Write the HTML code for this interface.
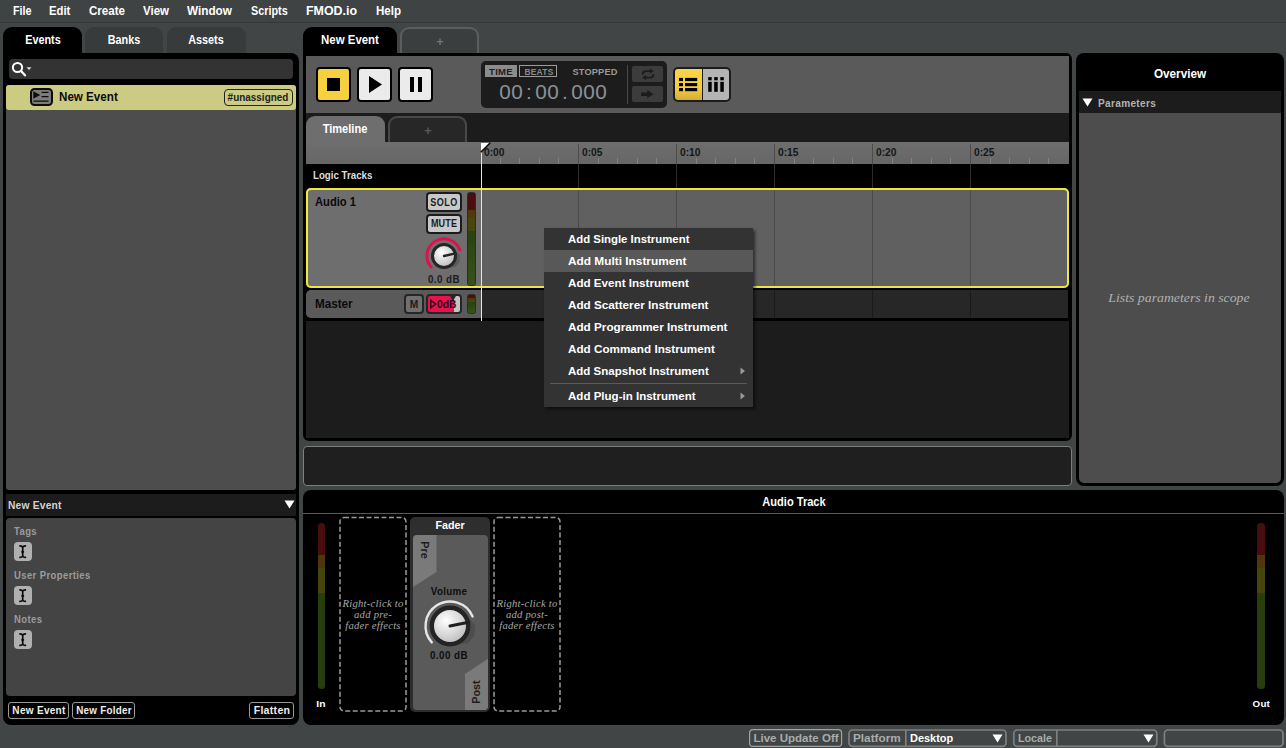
<!DOCTYPE html>
<html lang="en">
<head>
<meta charset="utf-8">
<title>FMOD Studio - New Event</title>
<style>
*{box-sizing:border-box;margin:0;padding:0}
html,body{width:1286px;height:748px;overflow:hidden}
body{background:#414545;font-family:"Liberation Sans",sans-serif;font-weight:bold;font-size:11.5px;color:#fff;position:relative}
.a{position:absolute}
.t{position:absolute;white-space:nowrap;line-height:14px;font-size:12.3px;transform-origin:0 50%;transform:scaleX(var(--s,.88))}
.tc{position:absolute;white-space:nowrap;line-height:14px;font-size:12.3px;transform:translateX(-50%) scaleX(var(--s,.88))}
/* menu bar */
#menubar{left:0;top:0;width:1286px;height:23px;background:#3f4343;border-bottom:1px solid #343838}
#menubar span{position:absolute;top:4px;font-size:12.300px;line-height:14px;color:#fff;transform-origin:0 50%;transform:scaleX(var(--s,.88))}
/* tabs */
.tab{border-radius:9px 9px 0 0;height:26px}
.tab.on{background:#000}
.tab.off{background:#373b3b}
.tab.plus{background:#3a3e3e;border:2px solid #5a5e5e;border-bottom:none;color:#6a6e6e}
.btn{border:1px solid #9a9a9a;border-radius:3px}
.lab{color:#9b9b9b;font-size:10.800px}
.ibtn{width:18px;height:18.700px;border-radius:4px;background:#b0b0b0}
.mi{left:24px;font-size:11.800px;color:#fff;--s:.93}
.clock{white-space:nowrap;font-weight:normal;font-size:19.600px;line-height:24px;color:#8a9299}
.clock i{display:inline-block;width:12px;text-align:center;font-style:normal;transform:scaleX(1.06)}
.sbox{top:730px;height:17px;border:1px solid #7d8181;border-radius:3px}
.meter2{border-radius:3.500px;background:linear-gradient(#480d0d 0,#480d0d 19%,#50360e 19%,#50360e 27%,#46440f 27%,#46440f 42.300%,#283e0e 42.300%)}
.trk{border:2px solid #1c1c1c;border-radius:4px;background:#c8c8c8}
.tbtn{top:67px;width:35px;height:35px;border:2px solid #000;border-radius:4px;background:#ebebeb}
.meter{border-radius:2.500px;border:1px solid #2c2c2c;background:linear-gradient(#4a0e0e 0,#4a0e0e 19%,#50380f 19%,#50380f 26.500%,#47460f 26.500%,#47460f 41%,#2a4110 41%,#36531a 100%)}
.hint{font-family:"Liberation Serif",serif;font-style:italic;font-weight:normal;color:#a8a8a8}
</style>
</head>
<body>

<!-- ===== MENU BAR ===== -->
<div id="menubar" class="a">
<span style="left:12.500px">File</span>
<span style="left:49px;--s:.92">Edit</span>
<span style="left:89px;--s:.94">Create</span>
<span style="left:143px;--s:.935">View</span>
<span style="left:186.500px;--s:.955">Window</span>
<span style="left:250.500px">Scripts</span>
<span style="left:306px;--s:1.01">FMOD.io</span>
<span style="left:375.500px;--s:.94">Help</span>
</div>

<!-- ===== LEFT PANEL ===== -->
<div id="left">
<div class="a tab on" style="left:3px;top:27px;width:79px"></div>
<div class="a tab off" style="left:85px;top:27px;width:78px"></div>
<div class="a tab off" style="left:167px;top:27px;width:79px"></div>
<div class="tc" style="left:42.5px;top:33px">Events</div>
<div class="tc" style="left:123.5px;top:33px">Banks</div>
<div class="tc" style="left:206px;top:33px">Assets</div>
<div class="a" style="left:3px;top:53px;width:296px;height:672px;background:#000;border-radius:0 8px 8px 8px"></div>
<!-- search -->
<div class="a" style="left:9px;top:59px;width:284px;height:20px;background:#333;border-radius:4px"></div>
<svg class="a" style="left:10px;top:60px" width="24" height="18" viewBox="0 0 24 18">
<circle cx="7.5" cy="7.5" r="4.6" fill="none" stroke="#fff" stroke-width="2"/>
<path d="M11 11 L15 15.3" stroke="#fff" stroke-width="2.4" stroke-linecap="round"/>
<path d="M16.5 7.2 h5 l-2.5 2.8z" fill="#ddd"/>
</svg>
<!-- list -->
<div class="a" style="left:6px;top:85px;width:290px;height:405px;background:#4d4d4d;border-radius:3px"></div>
<div class="a" style="left:6px;top:85px;width:290px;height:25px;background:#cccb82;border-radius:3px"></div>
<svg class="a" style="left:30px;top:88px" width="23" height="18" viewBox="0 0 23 18">
<rect x="1" y="1" width="21" height="16" rx="3.500" fill="#7c7c7c" stroke="#0c0c0c" stroke-width="2"/>
<path d="M3.300 3.200 L10.300 7 L3.300 10.800z" fill="#0c0c0c"/>
<path d="M11.500 4.400h7M11.500 8.600h7M3.500 13.200h15" stroke="#0c0c0c" stroke-width="1.300"/>
</svg>
<div class="t" style="left:59px;top:90px;color:#0c0c0c;--s:.945">New Event</div>
<div class="a" style="left:224px;top:89px;width:69px;height:17px;border:1px solid #222;border-radius:4px"></div>
<div class="tc" style="left:258px;top:90px;color:#222;font-size:11.3px">#unassigned</div>
<!-- properties header -->
<div class="a" style="left:6px;top:494px;width:290px;height:22px;background:#1c1c1c"></div>
<div class="t" style="left:8.300px;top:498.300px;font-size:10.800px;color:#d2d2d2;letter-spacing:.2px;--s:.95">New Event</div>
<svg class="a" style="left:284px;top:500px" width="11" height="9" viewBox="0 0 11 9"><path d="M0.5 0.5h10L5.5 8.5z" fill="#fff"/></svg>
<div class="a" style="left:6px;top:518px;width:290px;height:178px;background:#444;border-radius:4px"></div>
<div class="t lab" style="left:14px;top:523.500px;letter-spacing:.45px">Tags</div>
<div class="a ibtn" style="left:14px;top:542px"></div>
<div class="t lab" style="left:14px;top:567.500px;letter-spacing:.45px">User Properties</div>
<div class="a ibtn" style="left:14px;top:586px"></div>
<div class="t lab" style="left:14px;top:611.500px;letter-spacing:.45px">Notes</div>
<div class="a ibtn" style="left:14px;top:630px"></div>
<svg class="a" style="left:14px;top:542px" width="18" height="107" viewBox="0 0 18 107">
<g stroke="#0c0c0c" stroke-width="1.700" fill="none">
<path id="ib" d="M5.300 3.800 Q8 3.600 8.700 5.200 Q9.400 3.600 12.100 3.800 M8.700 4.800 V14.400 M5.300 15.400 Q8 15.600 8.700 14 Q9.400 15.600 12.100 15.400 M7.300 9.800h2.800"/>
<use href="#ib" y="44"/><use href="#ib" y="88"/>
</g></svg>
<div class="a btn" style="left:8px;top:702px;width:61px;height:17px"></div>
<div class="a btn" style="left:72px;top:702px;width:63px;height:17px"></div>
<div class="a btn" style="left:249px;top:702px;width:45px;height:17px"></div>
<div class="tc" style="left:38.500px;top:702.800px;font-size:10.800px;letter-spacing:.3px;color:#eee;--s:.93">New Event</div>
<div class="tc" style="left:103.500px;top:702.800px;font-size:10.800px;letter-spacing:.3px;color:#eee;--s:.91">New Folder</div>
<div class="tc" style="left:271.500px;top:702.800px;font-size:10.800px;letter-spacing:.3px;color:#eee;--s:.98">Flatten</div>
</div>

<!-- ===== CENTER PANEL ===== -->
<div id="center">
<div class="a tab on" style="left:303px;top:27px;width:94px"></div>
<div class="tc" style="left:349.5px;top:33px;--s:.93">New Event</div>
<div class="a tab plus" style="left:400px;top:27px;width:79px"></div>
<div class="tc" style="left:439.800px;top:35px;color:#6f7373;font-size:13.500px;--s:.95">+</div>
<div class="a" style="left:303px;top:53px;width:769px;height:388px;background:#000;border-radius:0 6px 6px 6px"></div>
<!-- transport -->
<div class="a" style="left:306px;top:56px;width:763px;height:57px;background:#5a5a5a"></div>
<div class="a tbtn" style="left:316px;background:#f7d03f"></div>
<div class="a tbtn" style="left:357px"></div>
<div class="a tbtn" style="left:398px"></div>
<svg class="a" style="left:316px;top:67px" width="118" height="35" viewBox="0 0 118 35">
<rect x="11" y="11" width="13" height="13" fill="#000"/>
<path d="M53 9 L66 17.5 L53 26z" fill="#000"/>
<rect x="94" y="10" width="4" height="15" fill="#000"/><rect x="102" y="10" width="4" height="15" fill="#000"/>
</svg>
<!-- time display -->
<div class="a" style="left:481px;top:61px;width:186px;height:47px;background:#1c1c1c;border-radius:5px"></div>
<div class="a" style="left:485px;top:65px;width:32px;height:12px;background:#8c8c8c"></div>
<div class="tc" style="left:501px;top:64.500px;font-size:9.500px;color:#1c1c1c;letter-spacing:.3px;--s:1">TIME</div>
<div class="a" style="left:519px;top:65px;width:38px;height:12px;border:1px solid #9a9a9a"></div>
<div class="tc" style="left:538.500px;top:64.500px;font-size:9.500px;color:#8c8c8c;letter-spacing:.3px;--s:.88">BEATS</div>
<div class="tc" style="left:595px;top:64.500px;font-size:9.500px;color:#9a9a9a;letter-spacing:.2px;--s:.97">STOPPED</div>
<div class="a clock" style="left:499px;top:80px"><i>0</i><i>0</i><i>:</i><i>0</i><i>0</i><i>.</i><i>0</i><i>0</i><i>0</i></div>
<div class="a" style="left:627px;top:65px;width:1px;height:39px;background:#4a4a4a"></div>
<div class="a" style="left:632px;top:66px;width:31px;height:16px;background:#3c3c3c;border-radius:2px"></div>
<div class="a" style="left:632px;top:86px;width:31px;height:16px;background:#3c3c3c;border-radius:2px"></div>
<svg class="a" style="left:632px;top:66px" width="31" height="36" viewBox="0 0 31 36">
<g fill="none" stroke="#1c1c1c" stroke-width="1.900">
<path d="M10.700 8.600 Q10.700 5.100 14 5.100 H18.500"/><path d="M21.300 8 Q21.300 11.600 18 11.600 H13.500"/>
</g>
<path d="M17.900 2.500 L21.800 5.100 L17.900 7.600z M14.100 9.100 L10.200 11.600 L14.100 14.100z" fill="#1c1c1c"/>
<path d="M9 26.400 H15.300 V24.100 L21.400 28.150 L15.300 32.200 V29.900 H9z" fill="#1c1c1c"/>
</svg>
<!-- list/grid toggle -->
<div class="a" style="left:673px;top:67px;width:58px;height:35px;background:#1c1c1c;border-radius:5px"></div>
<div class="a" style="left:675px;top:69px;width:27px;height:31px;background:linear-gradient(#fad546 0%,#f5cd3d 60%,#d6ae38 100%);border-radius:3px 0 0 3px"></div>
<div class="a" style="left:703px;top:69px;width:26px;height:31px;background:#b4b4b4;border-radius:0 3px 3px 0"></div>
<svg class="a" style="left:673px;top:67px" width="58" height="35" viewBox="0 0 58 35">
<g fill="#000">
<rect x="6" y="10.900" width="4" height="3.200"/><rect x="12" y="10.900" width="12.200" height="3.200"/>
<rect x="6" y="16" width="4" height="3.200"/><rect x="12" y="16" width="12.200" height="3.200"/>
<rect x="6" y="21" width="4" height="3.200"/><rect x="12" y="21" width="12.200" height="3.200"/>
<rect x="35.200" y="10.100" width="3.500" height="3.200"/><rect x="35.200" y="14.800" width="3.500" height="10"/>
<rect x="41.200" y="10.100" width="3.500" height="3.200"/><rect x="41.200" y="14.800" width="3.500" height="10"/>
<rect x="47.300" y="10.100" width="3.500" height="3.200"/><rect x="47.300" y="14.800" width="3.500" height="10"/>
</g></svg>
<!-- timeline tab strip -->
<div class="a" style="left:306px;top:113px;width:763px;height:325px;background:#1c1c1c"></div>
<div class="a" style="left:306px;top:116px;width:79px;height:26px;background:#6e6e6e;border-radius:9px 9px 0 0"></div>
<div class="tc" style="left:344.500px;top:122px;--s:.9">Timeline</div>
<div class="a" style="left:388px;top:116px;width:79px;height:26px;background:#272727;border:2px solid #484848;border-bottom:none;border-radius:9px 9px 0 0"></div>
<div class="tc" style="left:427.800px;top:124.300px;color:#5a5a5a;font-size:13.500px;--s:.95">+</div>
<!-- ruler -->
<div class="a" style="left:306px;top:142px;width:763px;height:22px;background:linear-gradient(#6e6e6e,#666)"></div>
<div class="a" style="left:500px;top:158px;width:1px;height:6px;background:#828282"></div>
<div class="a" style="left:519px;top:158px;width:1px;height:6px;background:#828282"></div>
<div class="a" style="left:539px;top:158px;width:1px;height:6px;background:#828282"></div>
<div class="a" style="left:558px;top:158px;width:1px;height:6px;background:#828282"></div>
<div class="a" style="left:598px;top:158px;width:1px;height:6px;background:#828282"></div>
<div class="a" style="left:617px;top:158px;width:1px;height:6px;background:#828282"></div>
<div class="a" style="left:637px;top:158px;width:1px;height:6px;background:#828282"></div>
<div class="a" style="left:656px;top:158px;width:1px;height:6px;background:#828282"></div>
<div class="a" style="left:696px;top:158px;width:1px;height:6px;background:#828282"></div>
<div class="a" style="left:715px;top:158px;width:1px;height:6px;background:#828282"></div>
<div class="a" style="left:735px;top:158px;width:1px;height:6px;background:#828282"></div>
<div class="a" style="left:754px;top:158px;width:1px;height:6px;background:#828282"></div>
<div class="a" style="left:794px;top:158px;width:1px;height:6px;background:#828282"></div>
<div class="a" style="left:813px;top:158px;width:1px;height:6px;background:#828282"></div>
<div class="a" style="left:833px;top:158px;width:1px;height:6px;background:#828282"></div>
<div class="a" style="left:852px;top:158px;width:1px;height:6px;background:#828282"></div>
<div class="a" style="left:892px;top:158px;width:1px;height:6px;background:#828282"></div>
<div class="a" style="left:911px;top:158px;width:1px;height:6px;background:#828282"></div>
<div class="a" style="left:931px;top:158px;width:1px;height:6px;background:#828282"></div>
<div class="a" style="left:950px;top:158px;width:1px;height:6px;background:#828282"></div>
<div class="a" style="left:990px;top:158px;width:1px;height:6px;background:#828282"></div>
<div class="a" style="left:1009px;top:158px;width:1px;height:6px;background:#828282"></div>
<div class="a" style="left:1029px;top:158px;width:1px;height:6px;background:#828282"></div>
<div class="a" style="left:1048px;top:158px;width:1px;height:6px;background:#828282"></div>
<div class="t" style="left:484px;top:144.700px;font-size:10.800px;color:#161616;--s:.95">0:00</div>
<div class="t" style="left:582px;top:144.700px;font-size:10.800px;color:#161616;--s:.95">0:05</div>
<div class="t" style="left:680px;top:144.700px;font-size:10.800px;color:#161616;--s:.95">0:10</div>
<div class="t" style="left:778px;top:144.700px;font-size:10.800px;color:#161616;--s:.95">0:15</div>
<div class="t" style="left:876px;top:144.700px;font-size:10.800px;color:#161616;--s:.95">0:20</div>
<div class="t" style="left:974px;top:144.700px;font-size:10.800px;color:#161616;--s:.95">0:25</div>

<!-- logic tracks -->
<div class="a" style="left:306px;top:164px;width:763px;height:157px;background:#000"></div>
<div class="t" style="left:312.700px;top:168.300px;font-size:10.800px;color:#ddd;--s:.9">Logic Tracks</div>
<!-- audio track -->
<div class="a" style="left:306px;top:188px;width:763px;height:100px;background:#606060;border-radius:5px"></div>
<div class="a" style="left:306px;top:188px;width:175px;height:100px;background:#6e6e6e;border-radius:5px 0 0 5px"></div>
<!-- master -->
<div class="a" style="left:306px;top:290px;width:762px;height:28px;background:#272727;border-radius:5px 0 0 5px"></div>
<div class="a" style="left:306px;top:290px;width:175px;height:28px;background:#5a5a5a;border-radius:5px 0 0 5px"></div>
<div class="a" style="left:306px;top:318px;width:763px;height:3px;background:#000"></div>
<div class="a" style="left:578px;top:144px;width:1px;height:20px;background:#4c4c4c"></div>
<div class="a" style="left:578px;top:164px;width:1px;height:24px;background:#2c2c2c"></div>
<div class="a" style="left:578px;top:190px;width:1px;height:96px;background:#4a4a4a"></div>
<div class="a" style="left:578px;top:290px;width:1px;height:28px;background:#1a1a1a"></div>
<div class="a" style="left:676px;top:144px;width:1px;height:20px;background:#4c4c4c"></div>
<div class="a" style="left:676px;top:164px;width:1px;height:24px;background:#2c2c2c"></div>
<div class="a" style="left:676px;top:190px;width:1px;height:96px;background:#4a4a4a"></div>
<div class="a" style="left:676px;top:290px;width:1px;height:28px;background:#1a1a1a"></div>
<div class="a" style="left:774px;top:144px;width:1px;height:20px;background:#4c4c4c"></div>
<div class="a" style="left:774px;top:164px;width:1px;height:24px;background:#2c2c2c"></div>
<div class="a" style="left:774px;top:190px;width:1px;height:96px;background:#4a4a4a"></div>
<div class="a" style="left:774px;top:290px;width:1px;height:28px;background:#1a1a1a"></div>
<div class="a" style="left:872px;top:144px;width:1px;height:20px;background:#4c4c4c"></div>
<div class="a" style="left:872px;top:164px;width:1px;height:24px;background:#2c2c2c"></div>
<div class="a" style="left:872px;top:190px;width:1px;height:96px;background:#4a4a4a"></div>
<div class="a" style="left:872px;top:290px;width:1px;height:28px;background:#1a1a1a"></div>
<div class="a" style="left:970px;top:144px;width:1px;height:20px;background:#4c4c4c"></div>
<div class="a" style="left:970px;top:164px;width:1px;height:24px;background:#2c2c2c"></div>
<div class="a" style="left:970px;top:190px;width:1px;height:96px;background:#4a4a4a"></div>
<div class="a" style="left:970px;top:290px;width:1px;height:28px;background:#1a1a1a"></div>

<div class="a" style="left:306px;top:188px;width:763px;height:100px;border:2px solid #efe63e;border-radius:5px"></div>
<div class="t" style="left:315px;top:195px;color:#0a0a0a;--s:.91">Audio 1</div>
<div class="t" style="left:315px;top:297px;color:#0a0a0a;--s:.95">Master</div>
<div class="a trk" style="left:426px;top:192.400px;width:36px;height:19.200px"></div>
<div class="a trk" style="left:426px;top:214.400px;width:36px;height:19.200px"></div>
<div class="tc" style="left:444.300px;top:195.500px;font-size:10.300px;color:#1c1c1c;letter-spacing:.5px;--s:.88">SOLO</div>
<div class="tc" style="left:444.100px;top:217.300px;font-size:10.300px;color:#1c1c1c;letter-spacing:.1px;--s:.88">MUTE</div>
<div class="a meter" style="left:466.500px;top:191.500px;width:9px;height:94px"></div>
<svg class="a" style="left:422px;top:234px" width="44" height="44" viewBox="-22 -22 44 44">
<defs><radialGradient id="kg" cx="40%" cy="35%" r="70%"><stop offset="0" stop-color="#fff"/><stop offset="1" stop-color="#b9b9b9"/></radialGradient></defs>
<path d="M6 -5 L12 -4.500 L16 -0.400 L15.400 6.200 L11.200 10.900 L5 11.400z" fill="#5b5b5b"/>
<path d="M-12.800 11.100 A17 17 0 1 1 15.900 -6" fill="none" stroke="#e0104c" stroke-width="2.800" stroke-linecap="round"/>
<circle r="11.500" fill="url(#kg)" stroke="#262626" stroke-width="3"/>
<path d="M0 0 L11.500 -2.600" stroke="#262626" stroke-width="2.400" stroke-linecap="round"/>
</svg>
<div class="tc" style="left:443.500px;top:273px;font-size:10.3px;color:#1c1c1c;letter-spacing:.5px;--s:.95">0.0 dB</div>
<!-- master buttons -->
<div class="a" style="left:404px;top:294px;width:20px;height:20px;background:#707070;border:2px solid #262626;border-radius:4px"></div>
<div class="tc" style="left:414px;top:297px;font-size:10.800px;color:#1c1c1c;--s:.95">M</div>
<div class="a" style="left:426px;top:294px;width:36px;height:20px;background:linear-gradient(90deg,#e8124f 0,#e8124f 26px,#c4c4c4 26px);border:2px solid #262626;border-radius:4px"></div>
<svg class="a" style="left:426px;top:294px" width="36" height="20" viewBox="0 0 36 20">
<path d="M4.800 6.300 L9.800 10 L4.800 13.700z" fill="none" stroke="#3a0a1c" stroke-width="1.500"/>
<path d="M24 2 h6 l-3 5z" fill="#262626"/>
</svg>
<div class="t" style="left:437px;top:297px;font-size:10.8px;color:#2a0a18;--s:.95">0dB</div>
<div class="a meter" style="left:466.500px;top:294px;width:9px;height:20px"></div>
<!-- playhead -->
<div class="a" style="left:481px;top:143px;width:1px;height:178px;background:#e6e6e6"></div>
<svg class="a" style="left:480px;top:142px" width="12" height="12" viewBox="0 0 12 12"><path d="M1 1h8.600L1 9.600z" fill="#fff"/><path d="M10.300 0.800L1 10.100" stroke="#0a0a0a" stroke-width="1.500"/></svg>
<!-- bottom box -->
<div class="a" style="left:303px;top:446px;width:769px;height:40px;background:#1f1f1f;border:1.500px solid #7e7e7e;border-radius:4px"></div>
</div>


<!-- ===== OVERVIEW PANEL ===== -->
<div id="right">
<div class="a" style="left:1076px;top:53px;width:208px;height:433px;background:#000;border-radius:8px"></div>
<div class="tc" style="left:1180.300px;top:67px;--s:.955">Overview</div>
<div class="a" style="left:1079px;top:91px;width:202px;height:22px;background:#1c1c1c"></div>
<svg class="a" style="left:1082px;top:98px" width="11" height="9" viewBox="0 0 11 9"><path d="M0.500 0.500h10L5.500 8.500z" fill="#fff"/></svg>
<div class="t" style="left:1097.500px;top:95.500px;font-size:10.600px;color:#b2b2b2;letter-spacing:.35px;--s:.95">Parameters</div>
<div class="a" style="left:1079px;top:113px;width:202px;height:370px;background:#4d4d4d;border-radius:0 0 5px 5px"></div>
<div class="tc hint" style="left:1179.300px;top:289.600px;font-size:13.200px;line-height:16px;color:#b0b0b0;--s:1.045">Lists parameters in scope</div>
</div>


<!-- ===== DECK / AUDIO TRACK PANEL ===== -->
<div id="deck">
<div class="a" style="left:303px;top:490px;width:981px;height:235px;background:#000;border-radius:8px"></div>
<div class="tc" style="left:793.500px;top:495px;--s:.9">Audio Track</div>
<div class="a" style="left:303px;top:513px;width:981px;height:1px;background:#5a5a5a"></div>
<div class="a meter2" style="left:318px;top:523px;width:7px;height:166px"></div>
<div class="tc" style="left:321px;top:697px;font-size:9.800px;letter-spacing:.2px;--s:1.05">In</div>
<div class="a meter2" style="left:1257.200px;top:523px;width:7.600px;height:166px"></div>
<div class="tc" style="left:1261.300px;top:697px;font-size:9.800px;letter-spacing:.2px;--s:1">Out</div>
<!-- pre-fader slot -->
<svg class="a" style="left:338px;top:516px" width="225" height="197" viewBox="0 0 225 197">
<rect x="2" y="1.500" width="66" height="193.500" rx="4" fill="none" stroke="#9a9a9a" stroke-width="1.500" stroke-dasharray="5 2.500"/>
<rect x="156" y="1.500" width="66" height="193.500" rx="4" fill="none" stroke="#9a9a9a" stroke-width="1.500" stroke-dasharray="5 2.500"/>
</svg>
<div class="tc hint" style="left:373px;top:597.800px;font-size:10.800px;line-height:11px;text-align:center;color:#a8a8a8;letter-spacing:.25px;--s:.985">Right-click to<br>add pre-<br>fader effects</div>
<div class="tc hint" style="left:527px;top:597.800px;font-size:10.800px;line-height:11px;text-align:center;color:#a8a8a8;letter-spacing:.25px;--s:.985">Right-click to<br>add post-<br>fader effects</div>
<!-- fader -->
<div class="a" style="left:410px;top:517px;width:80px;height:195px;background:#2e2e2e;border-radius:5px"></div>
<div class="a" style="left:412.500px;top:534.500px;width:75.500px;height:175px;background:#5a5a5a;border-radius:4px;overflow:hidden">
<svg class="a" style="left:0;top:0" width="76" height="175" viewBox="0 0 76 175">
<path d="M0 0 H23.500 V37 L0 52z" fill="#7a7a7a"/>
<path d="M76 123 L52 139 V175 H76z" fill="#7a7a7a"/>
</svg>
</div>
<div class="tc" style="left:450px;top:518px;font-size:11.300px;--s:.95">Fader</div>
<div class="a" style="left:418px;top:541px;width:14px;height:20px"><div style="position:absolute;left:7px;top:9px;transform:translate(-50%,-50%) rotate(90deg);font-size:10.800px;color:#1c1c1c;white-space:nowrap">Pre</div></div>
<div class="a" style="left:469px;top:679px;width:14px;height:26px"><div style="position:absolute;left:7px;top:13px;transform:translate(-50%,-50%) rotate(-90deg);font-size:10.800px;color:#1c1c1c;white-space:nowrap">Post</div></div>
<div class="tc" style="left:448.500px;top:584.600px;font-size:10.300px;color:#0e0e0e;letter-spacing:.3px;--s:.95">Volume</div>
<svg class="a" style="left:420px;top:596px" width="60" height="60" viewBox="-30 -30 60 60">
<path d="M10 -8 L19.500 -7 L25.200 -0.600 L24.300 9.700 L17.700 17.200 L8 18z" fill="#4d4d4d"/>
<path d="M-18.200 16.400 A24.500 24.500 0 1 1 22.600 -9.500" fill="none" stroke="#e6e6e6" stroke-width="2.400" stroke-linecap="round"/>
<circle r="18.200" fill="url(#kg)" stroke="#242424" stroke-width="4.400"/>
<path d="M0 0 L18.500 -3.800" stroke="#202020" stroke-width="3" stroke-linecap="round"/>
</svg>
<div class="tc" style="left:448.500px;top:649px;font-size:10.300px;color:#0e0e0e;letter-spacing:.5px;--s:.95">0.00 dB</div>
</div>


<!-- ===== STATUS BAR ===== -->
<div id="status">
<svg class="a" style="left:740px;top:724px" width="546" height="24" viewBox="740 724 546 24">
<g fill="none">
<rect x="749.600" y="729.600" width="92" height="16.800" rx="3.500" stroke="#a0a4a4" stroke-width="1.200"/>
<g stroke="#7c8080" stroke-width="1.700">
<rect x="849" y="730" width="157" height="16.300" rx="3.500"/>
<path d="M905.800 730V746.300"/>
<rect x="1013.800" y="730" width="143" height="16.300" rx="3.500"/>
<path d="M1056.800 730V746.300"/>
<rect x="1164.400" y="730" width="118.600" height="16.300" rx="3.500"/>
</g></g>
<path d="M992.500 734.500h10l-5 8z M1143.500 734.500h10l-5 8z" fill="#fff"/>
</svg>
<div class="tc" style="left:795.500px;top:731px;font-size:11.300px;color:#a8acac;--s:1.02">Live Update Off</div>
<div class="t" style="left:853px;top:731px;font-size:11.300px;color:#a8acac;--s:1.04">Platform</div>
<div class="t" style="left:910px;top:731px;font-size:11.300px;color:#fff;--s:.97">Desktop</div>
<div class="t" style="left:1018px;top:731px;font-size:11.300px;color:#a8acac;--s:.95">Locale</div>
</div>


<!-- ===== CONTEXT MENU ===== -->
<div id="ctx" class="a" style="left:544px;top:228px;width:209px;height:179px;background:#333;box-shadow:2px 2px 3px rgba(0,0,0,.55)">
<div class="a" style="left:0;top:22px;width:209px;height:22px;background:#585858"></div>
<div class="a" style="left:6px;top:155px;width:197px;height:1px;background:#5a5a5a"></div>
<div class="t mi" style="top:4px;--s:0.965">Add Single Instrument</div>
<div class="t mi" style="top:26px;--s:1.005">Add Multi Instrument</div>
<div class="t mi" style="top:48px;--s:0.986">Add Event Instrument</div>
<div class="t mi" style="top:70px;--s:0.992">Add Scatterer Instrument</div>
<div class="t mi" style="top:92px;--s:0.993">Add Programmer Instrument</div>
<div class="t mi" style="top:114px;--s:0.991">Add Command Instrument</div>
<div class="t mi" style="top:136px;--s:0.976">Add Snapshot Instrument</div>
<div class="t mi" style="top:161px;--s:0.978">Add Plug-in Instrument</div>
<svg class="a" style="left:196px;top:139px" width="6" height="8" viewBox="0 0 6 8"><path d="M0.500 0.500L5 4L0.500 7.500z" fill="#9a9a9a"/></svg>
<svg class="a" style="left:196px;top:164px" width="6" height="8" viewBox="0 0 6 8"><path d="M0.500 0.500L5 4L0.500 7.500z" fill="#9a9a9a"/></svg>
</div>

</body>
</html>
